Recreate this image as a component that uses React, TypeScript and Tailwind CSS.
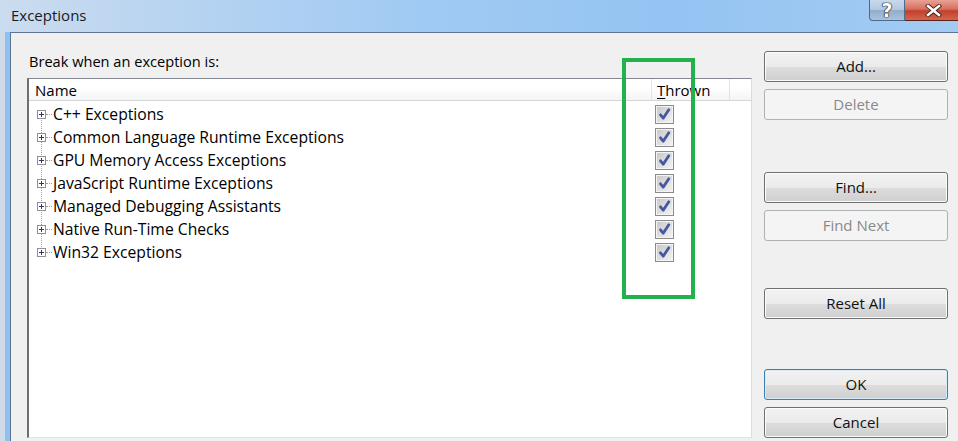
import React from "react";

const ITEMS = [
  "C++ Exceptions",
  "Common Language Runtime Exceptions",
  "GPU Memory Access Exceptions",
  "JavaScript Runtime Exceptions",
  "Managed Debugging Assistants",
  "Native Run-Time Checks",
  "Win32 Exceptions",
];

const FONT = { fontFamily: '"Open Sans", "Noto Sans", sans-serif' };

function Plus() {
  return (
    <span className="relative flex h-[9px] w-[9px] shrink-0 items-center justify-center border border-[#919191] bg-white">
      <span className="absolute h-px w-[5px] bg-[#2b3b6b]" />
      <span className="absolute h-[5px] w-px bg-[#2b3b6b]" />
    </span>
  );
}

function Check() {
  return (
    <span className="flex h-[19px] w-[19px] items-center justify-center border border-[#8c8c8c] bg-[#f4f4f4]">
      <span className="flex h-[15px] w-[15px] items-center justify-center bg-gradient-to-br from-[#c9c9c9] to-[#f2f2f2]">
        <svg width="15" height="15" viewBox="0 0 15 15">
          <path d="M3.5 7.8 L6.2 11.2 L11.8 2.8" fill="none" stroke="#4658a0" strokeWidth="2.8" strokeLinejoin="round" strokeLinecap="round" />
        </svg>
      </span>
    </span>
  );
}

function Btn({ label, disabled, def, className = "" }: { label: string; disabled?: boolean; def?: boolean; className?: string }) {
  const base = "flex h-[31px] w-[184px] items-center justify-center rounded-[3px] border text-[15px]";
  if (disabled)
    return <div className={`${base} border-[#adb2b5] bg-[#f4f4f4] text-[#8a8a8a] ${className}`}>{label}</div>;
  return (
    <div
      className={`${base} ${def ? "border-[#3c7fb1] shadow-[inset_0_0_0_1px_#d8ecf9]" : "border-[#707070] shadow-[inset_0_0_0_1px_#fbfbfb]"} bg-[linear-gradient(#f2f2f2_0%,#ebebeb_50%,#dddddd_51%,#cfcfcf_100%)] text-[#111] ${className}`}
    >
      {label}
    </div>
  );
}

export default function App() {
  return (
    <div className="relative flex h-[441px] w-[958px] flex-col overflow-hidden bg-[#cfdbe9] text-[15px] text-black" style={FONT}>
      {/* title bar */}
      <div className="flex h-[32px] shrink-0 bg-[linear-gradient(90deg,#cbdcef_0%,#b6d3f1_20%,#9fcaf3_45%,#95c4f2_70%,#a2cbf2_100%)]">
        <div className="pl-[11px] pt-[4px] text-[15px] text-[#1a1a1a]">Exceptions</div>
        <div className="ml-auto mr-[-4px] flex h-[21px] items-start">
          <div className="flex h-[21px] w-[36px] items-center justify-center rounded-bl-[4px] border border-t-0 border-[#4d6a8c] bg-[linear-gradient(#c8d9ec_0%,#b2c8df_50%,#94adc8_51%,#a6c3df_100%)]">
            <span className="text-[19px] font-bold leading-[19px] text-white [text-shadow:0_0_1px_#222,0_0_1px_#222,0_0_1px_#222,0_0_1px_#222]" style={{ fontFamily: '"DejaVu Sans", sans-serif' }}>?</span>
          </div>
          <div className="flex h-[21px] w-[57px] items-center justify-center border-b border-[#5a2019] bg-[linear-gradient(#e8a193_0%,#d6705e_45%,#c2402b_55%,#d5654d_100%)]">
            <svg width="17" height="13" viewBox="0 0 17 13">
              <path d="M3 2 L14 11 M14 2 L3 11" stroke="#3a1a16" strokeWidth="4.2" strokeLinecap="square" />
              <path d="M3 2 L14 11 M14 2 L3 11" stroke="#ffffff" strokeWidth="2.6" strokeLinecap="square" />
            </svg>
          </div>
        </div>
      </div>

      {/* body */}
      <div className="flex min-h-0 flex-1">
        <div className="w-[5px] shrink-0 bg-[#cfdbe9]" />
        <div className="w-[5px] shrink-0 bg-[#8fc0f2]" />
        <div className="flex flex-1 border-l border-t border-[#5e7492] bg-[#f0f0f0]">
          {/* left column */}
          <div className="flex w-[741px] flex-col pb-[3px] pl-[16px]">
            <div className="mt-[17px] h-[22px] pl-[2px] text-[14.6px] leading-[22px]">Break when an exception is:</div>
            <div className="mt-[6px] flex flex-1 flex-col border-b border-l-2 border-r border-t border-b-[#e3e3e3] border-l-[#6f6f6f] border-r-[#dcdcdc] border-t-[#828790] bg-white">
              {/* header */}
              <div className="flex h-[22px] border-b border-[#d5d5d5] bg-[linear-gradient(#ffffff_0%,#ffffff_40%,#f3f4f6_100%)] leading-[22px]">
                <div className="w-[623px] border-r border-[#e3e3e3] pl-[6px]">Name</div>
                <div className="w-[78px] border-r border-[#e3e3e3] pl-[5px]">
                  <span className="underline underline-offset-2">T</span>hrown
                </div>
                <div className="flex-1" />
              </div>
              {/* rows */}
              <div className="relative pt-[2px]">
                <div className="absolute left-[12px] top-[14px] h-[138px] border-l border-dotted border-[#a0a0a0]" />
                {ITEMS.map((it) => (
                  <div key={it} className="flex h-[23px] items-center">
                    <div className="flex w-[626px] items-center pl-[8px]">
                      <span className="relative z-10">
                        <Plus />
                      </span>
                      <span className="w-[6px] border-t border-dotted border-[#a0a0a0]" />
                      <span className="pl-[1px] text-[15.7px] leading-[23px]">{it}</span>
                    </div>
                    <Check />
                  </div>
                ))}
              </div>
            </div>
          </div>

          {/* right column */}
          <div className="flex flex-col pl-[12px] pt-[18px]">
            <Btn label="Add..." />
            <Btn label="Delete" disabled className="mt-[7px]" />
            <Btn label="Find..." className="mt-[52px]" />
            <Btn label="Find Next" disabled className="mt-[7px]" />
            <Btn label="Reset All" className="mt-[47px]" />
            <Btn label="OK" def className="mt-[50px]" />
            <Btn label="Cancel" className="mt-[7px]" />
          </div>
        </div>
      </div>

      {/* green annotation box */}
      <div className="pointer-events-none absolute left-[622px] top-[58px] h-[241px] w-[73px] border-4 border-[#22b14c]" />
    </div>
  );
}
